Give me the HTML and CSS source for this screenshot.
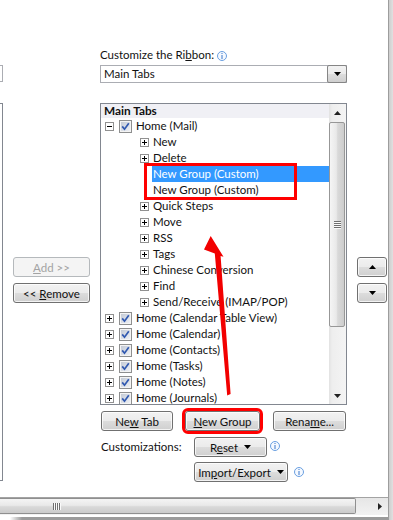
FILE: index.html
```html
<!DOCTYPE html>
<html lang="en">
<head>
<meta charset="utf-8">
<title>Customize the Ribbon</title>
<link rel="stylesheet" href="styles.css">
</head>
<body>
<div class="window">
  <div class="main">
    <div class="content">
      <div class="col-left">
        <div class="stub-combo"></div>
        <div class="stub-list"></div>
      </div>

      <div class="col-addremove">
        <button class="btn disabled"><span><u>A</u>dd &gt;&gt;</span></button>
        <button class="btn"><span>&lt;&lt; <u>R</u>emove</span></button>
      </div>

      <div class="col-ribbon">
        <div class="label"><span>Customize the Ri<u>b</u>bon:</span><svg class="info" width="10" height="10" viewBox="0 0 10 10"><circle cx="5" cy="5" r="4.5" fill="#f5f9ff" stroke="#6a9fe0"/><rect x="4.5" y="2" width="1" height="1" fill="#3b78cc"/><rect x="4.5" y="4" width="1" height="4" fill="#3b78cc"/></svg></div>

        <div class="combo">
          <span class="combo-text">Main Tabs</span>
          <span class="combo-btn"><svg width="7" height="4" viewBox="0 0 7 4"><path d="M0 0h7L3.5 4z" fill="#000"/></svg></span>
        </div>

        <div class="listbox">
          <div class="tree">
            <div class="tree-header">Main Tabs</div>

            <div class="row l0"><span class="exp"><svg width="9" height="9" viewBox="0 0 9 9"><rect x=".5" y=".5" width="8" height="8" fill="#fff" stroke="#919191"/><path d="M2 4.5h5" stroke="#000"/></svg></span><span class="cb"><svg width="13" height="13" viewBox="0 0 13 13"><rect x=".5" y=".5" width="12" height="12" fill="#f4f4f4" stroke="#8e8f8f"/><rect x="2" y="2" width="9" height="9" fill="url(#cbg)"/><path d="M3.2 6.4l2.3 2.8L9.8 3.2" stroke="#3159b0" stroke-width="1.7" fill="none"/></svg></span><span class="txt">Home (Mail)</span></div>
            <div class="row l1"><span class="exp"><svg width="9" height="9" viewBox="0 0 9 9"><rect x=".5" y=".5" width="8" height="8" fill="#fff" stroke="#919191"/><path d="M2 4.5h5M4.5 2v5" stroke="#000"/></svg></span><span class="txt">New</span></div>
            <div class="row l1"><span class="exp"><svg width="9" height="9" viewBox="0 0 9 9"><rect x=".5" y=".5" width="8" height="8" fill="#fff" stroke="#919191"/><path d="M2 4.5h5M4.5 2v5" stroke="#000"/></svg></span><span class="txt">Delete</span></div>
            <div class="row l1 noexp sel"><span class="txt">New Group (Custom)</span></div>
            <div class="row l1 noexp"><span class="txt">New Group (Custom)</span></div>
            <div class="row l1"><span class="exp"><svg width="9" height="9" viewBox="0 0 9 9"><rect x=".5" y=".5" width="8" height="8" fill="#fff" stroke="#919191"/><path d="M2 4.5h5M4.5 2v5" stroke="#000"/></svg></span><span class="txt">Quick Steps</span></div>
            <div class="row l1"><span class="exp"><svg width="9" height="9" viewBox="0 0 9 9"><rect x=".5" y=".5" width="8" height="8" fill="#fff" stroke="#919191"/><path d="M2 4.5h5M4.5 2v5" stroke="#000"/></svg></span><span class="txt">Move</span></div>
            <div class="row l1"><span class="exp"><svg width="9" height="9" viewBox="0 0 9 9"><rect x=".5" y=".5" width="8" height="8" fill="#fff" stroke="#919191"/><path d="M2 4.5h5M4.5 2v5" stroke="#000"/></svg></span><span class="txt">RSS</span></div>
            <div class="row l1"><span class="exp"><svg width="9" height="9" viewBox="0 0 9 9"><rect x=".5" y=".5" width="8" height="8" fill="#fff" stroke="#919191"/><path d="M2 4.5h5M4.5 2v5" stroke="#000"/></svg></span><span class="txt">Tags</span></div>
            <div class="row l1"><span class="exp"><svg width="9" height="9" viewBox="0 0 9 9"><rect x=".5" y=".5" width="8" height="8" fill="#fff" stroke="#919191"/><path d="M2 4.5h5M4.5 2v5" stroke="#000"/></svg></span><span class="txt">Chinese Conversion</span></div>
            <div class="row l1"><span class="exp"><svg width="9" height="9" viewBox="0 0 9 9"><rect x=".5" y=".5" width="8" height="8" fill="#fff" stroke="#919191"/><path d="M2 4.5h5M4.5 2v5" stroke="#000"/></svg></span><span class="txt">Find</span></div>
            <div class="row l1"><span class="exp"><svg width="9" height="9" viewBox="0 0 9 9"><rect x=".5" y=".5" width="8" height="8" fill="#fff" stroke="#919191"/><path d="M2 4.5h5M4.5 2v5" stroke="#000"/></svg></span><span class="txt">Send/Receive (IMAP/POP)</span></div>
            <div class="row l0"><span class="exp"><svg width="9" height="9" viewBox="0 0 9 9"><rect x=".5" y=".5" width="8" height="8" fill="#fff" stroke="#919191"/><path d="M2 4.5h5M4.5 2v5" stroke="#000"/></svg></span><span class="cb"><svg width="13" height="13" viewBox="0 0 13 13"><rect x=".5" y=".5" width="12" height="12" fill="#f4f4f4" stroke="#8e8f8f"/><rect x="2" y="2" width="9" height="9" fill="url(#cbg)"/><path d="M3.2 6.4l2.3 2.8L9.8 3.2" stroke="#3159b0" stroke-width="1.7" fill="none"/></svg></span><span class="txt">Home (Calendar Table View)</span></div>
            <div class="row l0"><span class="exp"><svg width="9" height="9" viewBox="0 0 9 9"><rect x=".5" y=".5" width="8" height="8" fill="#fff" stroke="#919191"/><path d="M2 4.5h5M4.5 2v5" stroke="#000"/></svg></span><span class="cb"><svg width="13" height="13" viewBox="0 0 13 13"><rect x=".5" y=".5" width="12" height="12" fill="#f4f4f4" stroke="#8e8f8f"/><rect x="2" y="2" width="9" height="9" fill="url(#cbg)"/><path d="M3.2 6.4l2.3 2.8L9.8 3.2" stroke="#3159b0" stroke-width="1.7" fill="none"/></svg></span><span class="txt">Home (Calendar)</span></div>
            <div class="row l0"><span class="exp"><svg width="9" height="9" viewBox="0 0 9 9"><rect x=".5" y=".5" width="8" height="8" fill="#fff" stroke="#919191"/><path d="M2 4.5h5M4.5 2v5" stroke="#000"/></svg></span><span class="cb"><svg width="13" height="13" viewBox="0 0 13 13"><rect x=".5" y=".5" width="12" height="12" fill="#f4f4f4" stroke="#8e8f8f"/><rect x="2" y="2" width="9" height="9" fill="url(#cbg)"/><path d="M3.2 6.4l2.3 2.8L9.8 3.2" stroke="#3159b0" stroke-width="1.7" fill="none"/></svg></span><span class="txt">Home (Contacts)</span></div>
            <div class="row l0"><span class="exp"><svg width="9" height="9" viewBox="0 0 9 9"><rect x=".5" y=".5" width="8" height="8" fill="#fff" stroke="#919191"/><path d="M2 4.5h5M4.5 2v5" stroke="#000"/></svg></span><span class="cb"><svg width="13" height="13" viewBox="0 0 13 13"><rect x=".5" y=".5" width="12" height="12" fill="#f4f4f4" stroke="#8e8f8f"/><rect x="2" y="2" width="9" height="9" fill="url(#cbg)"/><path d="M3.2 6.4l2.3 2.8L9.8 3.2" stroke="#3159b0" stroke-width="1.7" fill="none"/></svg></span><span class="txt">Home (Tasks)</span></div>
            <div class="row l0"><span class="exp"><svg width="9" height="9" viewBox="0 0 9 9"><rect x=".5" y=".5" width="8" height="8" fill="#fff" stroke="#919191"/><path d="M2 4.5h5M4.5 2v5" stroke="#000"/></svg></span><span class="cb"><svg width="13" height="13" viewBox="0 0 13 13"><rect x=".5" y=".5" width="12" height="12" fill="#f4f4f4" stroke="#8e8f8f"/><rect x="2" y="2" width="9" height="9" fill="url(#cbg)"/><path d="M3.2 6.4l2.3 2.8L9.8 3.2" stroke="#3159b0" stroke-width="1.7" fill="none"/></svg></span><span class="txt">Home (Notes)</span></div>
            <div class="row l0"><span class="exp"><svg width="9" height="9" viewBox="0 0 9 9"><rect x=".5" y=".5" width="8" height="8" fill="#fff" stroke="#919191"/><path d="M2 4.5h5M4.5 2v5" stroke="#000"/></svg></span><span class="cb"><svg width="13" height="13" viewBox="0 0 13 13"><rect x=".5" y=".5" width="12" height="12" fill="#f4f4f4" stroke="#8e8f8f"/><rect x="2" y="2" width="9" height="9" fill="url(#cbg)"/><path d="M3.2 6.4l2.3 2.8L9.8 3.2" stroke="#3159b0" stroke-width="1.7" fill="none"/></svg></span><span class="txt">Home (Journals)</span></div>

            <div class="redbox"></div>
          </div>

          <div class="vscroll">
            <div class="vs-btn"><svg width="7" height="4" viewBox="0 0 7 4"><path d="M3.5 0L7 4H0z" fill="#222"/></svg></div>
            <div class="vs-thumb"><svg width="7" height="8" viewBox="0 0 7 8"><path d="M0 .5h7M0 2.5h7M0 4.5h7M0 6.5h7" stroke="#707070"/><path d="M0 1.5h7M0 3.5h7M0 5.5h7M0 7.5h7" stroke="#fafafa"/></svg></div>
            <div class="vs-track"></div>
            <div class="vs-btn"><svg width="7" height="4" viewBox="0 0 7 4"><path d="M0 0h7L3.5 4z" fill="#222"/></svg></div>
          </div>
        </div>

        <div class="btn-row">
          <button class="btn w-newtab"><span>Ne<u>w</u> Tab</span></button>
          <button class="btn w-newgroup hl"><span><u>N</u>ew Group</span></button>
          <button class="btn w-rename"><span>Rena<u>m</u>e...</span></button>
        </div>

        <div class="cust-row">
          <span class="cust-label">Customizations:</span>
          <button class="btn w-reset"><span>R<u>e</u>set</span><svg width="7" height="4" viewBox="0 0 7 4"><path d="M0 0h7L3.5 4z" fill="#000"/></svg></button>
          <svg class="info info-reset" width="10" height="10" viewBox="0 0 10 10"><circle cx="5" cy="5" r="4.5" fill="#f5f9ff" stroke="#6a9fe0"/><rect x="4.5" y="2" width="1" height="1" fill="#3b78cc"/><rect x="4.5" y="4" width="1" height="4" fill="#3b78cc"/></svg>
        </div>

        <div class="cust-row cust-row2">
          <button class="btn w-import"><span>Im<u>p</u>ort/Export</span><svg width="7" height="4" viewBox="0 0 7 4"><path d="M0 0h7L3.5 4z" fill="#000"/></svg></button>
          <svg class="info info-import" width="10" height="10" viewBox="0 0 10 10"><circle cx="5" cy="5" r="4.5" fill="#f5f9ff" stroke="#6a9fe0"/><rect x="4.5" y="2" width="1" height="1" fill="#3b78cc"/><rect x="4.5" y="4" width="1" height="4" fill="#3b78cc"/></svg>
        </div>
      </div>

      <div class="col-updown">
        <button class="btn"><svg width="7" height="4" viewBox="0 0 7 4"><path d="M3.5 0L7 4H0z" fill="#000"/></svg></button>
        <button class="btn"><svg width="7" height="4" viewBox="0 0 7 4"><path d="M0 0h7L3.5 4z" fill="#000"/></svg></button>
      </div>
    </div>

    <div class="hscroll">
      <div class="hs-thumb"><svg width="8" height="7" viewBox="0 0 8 7"><path d="M.5 0v7M2.5 0v7M4.5 0v7M6.5 0v7" stroke="#707070"/><path d="M1.5 0v7M3.5 0v7M5.5 0v7M7.5 0v7" stroke="#fafafa"/></svg></div>
      <div class="hs-track"></div>
      <div class="hs-btn"><svg width="4" height="7" viewBox="0 0 4 7"><path d="M0 0l4 3.5L0 7z" fill="#222"/></svg></div>
    </div>
    <div class="bottom-edge"><div class="bottom-bar"></div></div>
  </div>
  <div class="right-edge"></div>
</div>

<svg class="arrow" width="393" height="520" viewBox="0 0 393 520">
  <defs>
    <linearGradient id="cbg" x1="0" y1="0" x2="1" y2="1">
      <stop offset="0" stop-color="#c3cad6"/>
      <stop offset="1" stop-color="#eef0f4"/>
    </linearGradient>
  </defs>
  <polygon points="210.7,236 223.5,256.8 220.6,256 230.6,394 227.2,395.6 214.8,253.6 204,249.5" fill="#f20000"/>
</svg>
</body>
</html>
```

FILE: styles.css
```css
* { box-sizing: border-box; }

body {
  margin: 0;
  width: 393px;
  height: 520px;
  overflow: hidden;
  position: relative;
  background: #fff;
  font-family: Lato, "Noto Sans", "DejaVu Sans", sans-serif;
  font-size: 11.5px;
  color: #111;
}

.window { display: flex; height: 520px; }
.main { width: 388px; display: flex; flex-direction: column; }
.content { height: 497px; display: flex; }

/* left edge (other list) */
.col-left { width: 3px; flex: none; }
.stub-combo {
  margin-top: 65px;
  height: 17px;
  width: 3px;
  border: 1px solid #abadb3;
  border-left: 0;
}
.stub-list {
  margin-top: 21px;
  height: 378px;
  width: 3px;
  border: 1px solid #828790;
  border-left: 0;
}

/* add / remove */
.col-addremove {
  flex: none;
  width: 77px;
  margin-left: 10px;
  padding-top: 257px;
  display: flex;
  flex-direction: column;
  gap: 6px;
}

/* buttons */
.btn {
  height: 20px;
  border: 1px solid #707070;
  border-radius: 3px;
  background: linear-gradient(#f2f2f2, #ebebeb 50%, #dddddd 50%, #cfcfcf);
  box-shadow: inset 0 0 0 1px rgba(255, 255, 255, 0.75);
  font: inherit;
  color: #111;
  padding: 0;
  margin: 0;
  display: flex;
  align-items: center;
  justify-content: center;
  gap: 6px;
  white-space: nowrap;
}
.btn.disabled {
  border-color: #b5b9bc;
  background: #f4f4f4;
  box-shadow: none;
  color: #a3a3a3;
}
.btn.hl { outline: 3px solid #ff0000; }

/* ribbon column */
.col-ribbon { flex: none; width: 247px; margin-left: 10px; }

.label {
  margin-top: 47px;
  height: 16px;
  line-height: 16px;
  display: flex;
  align-items: center;
  white-space: nowrap;
}
.info { flex: none; display: block; }
.label .info { margin-left: 3px; margin-top: 2px; }

.combo {
  margin-top: 2px;
  height: 18px;
  border: 1px solid #abadb3;
  display: flex;
}
.combo-text { flex: 1; padding-left: 3px; line-height: 16px; }
.combo-btn {
  width: 20px;
  margin: -1px -1px -1px 0;
  border: 1px solid #858585;
  border-radius: 2px;
  background: linear-gradient(#f2f2f2, #ebebeb 50%, #dddddd 50%, #cfcfcf);
  display: flex;
  align-items: center;
  justify-content: center;
}

.listbox {
  margin-top: 20px;
  height: 302px;
  border: 1px solid #828790;
  display: flex;
}
.tree { flex: 1; min-width: 0; overflow: hidden; position: relative; }
.tree-header {
  height: 14px;
  line-height: 14px;
  background: #f0f0f5;
  font-weight: bold;
  font-size: 11.8px;
  padding-left: 3px;
}
.row {
  height: 16px;
  display: flex;
  align-items: center;
  white-space: nowrap;
}
.row .txt { line-height: 16px; padding: 0 1px; }
.exp { flex: none; width: 9px; height: 9px; display: flex; }
.cb { flex: none; width: 13px; height: 13px; display: flex; }
.l0 { padding-left: 4px; }
.l0 .exp { margin-right: 5px; }
.l0 .cb { margin-right: 3px; }
.l1 { padding-left: 39px; }
.l1 .exp { margin-right: 3px; }
.l1.noexp { padding-left: 51px; }
.sel .txt { flex: 1; background: #3399ff; color: #fff; }

.redbox {
  position: absolute;
  left: 43px;
  top: 59px;
  width: 153px;
  height: 37px;
  border: 3px solid #ff0000;
}

.vscroll {
  width: 17px;
  flex: none;
  display: flex;
  flex-direction: column;
  background: linear-gradient(to right, #e2e2e2, #eeeeee 3px, #f4f4f4);
}
.vs-btn { height: 17px; flex: none; display: flex; align-items: center; justify-content: center; }
.vs-thumb {
  height: 205px;
  flex: none;
  margin: 1px 1px 0 0;
  border: 1px solid #979797;
  border-radius: 2px;
  background: linear-gradient(to right, #f5f5f5, #e9e9e9 45%, #d9d9d9 55%, #cdcdcd);
  display: flex;
  align-items: center;
  justify-content: center;
}
.vs-track { flex: 1; }

.btn-row { display: flex; margin-top: 6px; height: 20px; }
.w-newtab { width: 72px; margin-left: 1px; }
.w-newgroup { width: 75px; margin-left: 12px; }
.w-rename { width: 73px; margin-left: 13px; }

.cust-row { display: flex; align-items: center; margin-top: 6px; height: 20px; }
.cust-label { width: 93px; margin-left: 1px; line-height: 16px; }
.w-reset { width: 73px; }
.info-reset { margin-left: 3px; margin-top: -2px; }
.cust-row2 { margin-top: 5px; padding-left: 94px; }
.w-import { width: 94px; }
.info-import { margin-left: 6px; }

/* up / down */
.col-updown {
  flex: none;
  width: 30px;
  margin-left: 10px;
  padding-top: 257px;
  display: flex;
  flex-direction: column;
  gap: 6px;
}

/* horizontal scrollbar */
.hscroll {
  height: 18px;
  border-top: 1px solid #a3a3a3;
  display: flex;
  background: linear-gradient(#e6e6e6, #f2f2f2);
}
.hs-thumb {
  width: 356px;
  height: 16px;
  border: 1px solid #8f8f8f;
  border-left: 0;
  border-radius: 0 2px 2px 0;
  background: linear-gradient(#f4f4f4, #e9e9e9 45%, #d9d9d9 55%, #cbcbcb);
  display: flex;
  align-items: center;
  padding-left: 53px;
}
.hs-track { flex: 1; }
.hs-btn { width: 17px; flex: none; display: flex; align-items: center; justify-content: center; }

.bottom-edge { height: 5px; padding-top: 2px; }
.bottom-bar {
  height: 3px;
  background: linear-gradient(to right, #ffffff, #ffffff 10px, #9b9b9b 22px, #9b9b9b);
}

.right-edge {
  width: 5px;
  flex: none;
  border-left: 1px solid #9d9d9d;
  background: linear-gradient(to right, #cdcdcd, #e0e0e0);
}

.arrow {
  position: absolute;
  left: 0;
  top: 0;
  pointer-events: none;
}
```
